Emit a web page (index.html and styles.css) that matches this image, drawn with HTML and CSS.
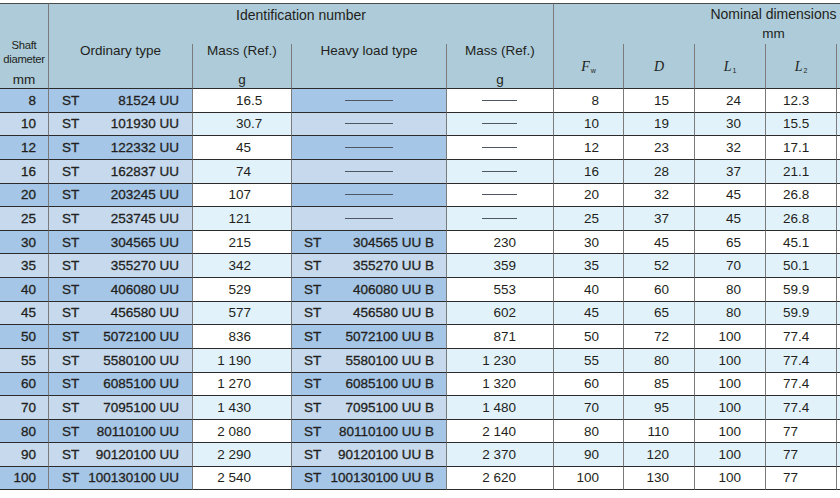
FILE: index.html
```html
<!DOCTYPE html>
<html lang="en">
<head>
<meta charset="utf-8">
<title>Shaft table</title>
<link rel="stylesheet" href="styles.css">
</head>
<body>
<div class="sheet">
<div class="grid">
  <div class="h h-shaft"><span>Shaft<br>diameter</span></div>
  <div class="h h-id">Identification number</div>
  <div class="h h-nom"><span class="big">Nominal dimensions</span><br>mm</div>
  <div class="h h-ord">Ordinary type</div>
  <div class="h h-mass">Mass (Ref.)</div>
  <div class="h h-heavy">Heavy load type</div>
  <div class="h h-mass2">Mass (Ref.)</div>
  <div class="h h-fw"><span class="sym">F</span><span class="sub">w</span></div>
  <div class="h h-d"><span class="sym">D</span></div>
  <div class="h h-l1"><span class="sym">L</span><span class="sub">1</span></div>
  <div class="h h-l2"><span class="sym">L</span><span class="sub">2</span></div>
  <div class="h h-x"></div>
  <div class="h h-mm">mm</div>
  <div class="h h-g1">g</div>
  <div class="h h-g2">g</div>

  <div class="row odd">
    <div class="c first shaft">8</div><div class="c id"><span>ST</span><span>81524 UU</span></div><div class="c mass"><span>16</span><span class="fr">.5</span></div><div class="c hid"><span class="dash wide"></span></div><div class="c hmass"><span class="dash"></span></div><div class="c n1">8</div><div class="c n2">15</div><div class="c n3">24</div><div class="c n4">12.3</div><div class="c nx"></div>
  </div>
  <div class="row even">
    <div class="c first shaft">10</div><div class="c id"><span>ST</span><span>101930 UU</span></div><div class="c mass"><span>30</span><span class="fr">.7</span></div><div class="c hid"><span class="dash wide"></span></div><div class="c hmass"><span class="dash"></span></div><div class="c n1">10</div><div class="c n2">19</div><div class="c n3">30</div><div class="c n4">15.5</div><div class="c nx"></div>
  </div>
  <div class="row odd">
    <div class="c first shaft">12</div><div class="c id"><span>ST</span><span>122332 UU</span></div><div class="c mass"><span>45</span><span class="fr"></span></div><div class="c hid"><span class="dash wide"></span></div><div class="c hmass"><span class="dash"></span></div><div class="c n1">12</div><div class="c n2">23</div><div class="c n3">32</div><div class="c n4">17.1</div><div class="c nx"></div>
  </div>
  <div class="row even">
    <div class="c first shaft">16</div><div class="c id"><span>ST</span><span>162837 UU</span></div><div class="c mass"><span>74</span><span class="fr"></span></div><div class="c hid"><span class="dash wide"></span></div><div class="c hmass"><span class="dash"></span></div><div class="c n1">16</div><div class="c n2">28</div><div class="c n3">37</div><div class="c n4">21.1</div><div class="c nx"></div>
  </div>
  <div class="row odd">
    <div class="c first shaft">20</div><div class="c id"><span>ST</span><span>203245 UU</span></div><div class="c mass"><span>107</span><span class="fr"></span></div><div class="c hid"><span class="dash wide"></span></div><div class="c hmass"><span class="dash"></span></div><div class="c n1">20</div><div class="c n2">32</div><div class="c n3">45</div><div class="c n4">26.8</div><div class="c nx"></div>
  </div>
  <div class="row even">
    <div class="c first shaft">25</div><div class="c id"><span>ST</span><span>253745 UU</span></div><div class="c mass"><span>121</span><span class="fr"></span></div><div class="c hid"><span class="dash wide"></span></div><div class="c hmass"><span class="dash"></span></div><div class="c n1">25</div><div class="c n2">37</div><div class="c n3">45</div><div class="c n4">26.8</div><div class="c nx"></div>
  </div>
  <div class="row odd">
    <div class="c first shaft">30</div><div class="c id"><span>ST</span><span>304565 UU</span></div><div class="c mass"><span>215</span><span class="fr"></span></div><div class="c hid id2"><span>ST</span><span>304565 UU B</span></div><div class="c hmass">230</div><div class="c n1">30</div><div class="c n2">45</div><div class="c n3">65</div><div class="c n4">45.1</div><div class="c nx"></div>
  </div>
  <div class="row even">
    <div class="c first shaft">35</div><div class="c id"><span>ST</span><span>355270 UU</span></div><div class="c mass"><span>342</span><span class="fr"></span></div><div class="c hid id2"><span>ST</span><span>355270 UU B</span></div><div class="c hmass">359</div><div class="c n1">35</div><div class="c n2">52</div><div class="c n3">70</div><div class="c n4">50.1</div><div class="c nx"></div>
  </div>
  <div class="row odd">
    <div class="c first shaft">40</div><div class="c id"><span>ST</span><span>406080 UU</span></div><div class="c mass"><span>529</span><span class="fr"></span></div><div class="c hid id2"><span>ST</span><span>406080 UU B</span></div><div class="c hmass">553</div><div class="c n1">40</div><div class="c n2">60</div><div class="c n3">80</div><div class="c n4">59.9</div><div class="c nx"></div>
  </div>
  <div class="row even">
    <div class="c first shaft">45</div><div class="c id"><span>ST</span><span>456580 UU</span></div><div class="c mass"><span>577</span><span class="fr"></span></div><div class="c hid id2"><span>ST</span><span>456580 UU B</span></div><div class="c hmass">602</div><div class="c n1">45</div><div class="c n2">65</div><div class="c n3">80</div><div class="c n4">59.9</div><div class="c nx"></div>
  </div>
  <div class="row odd">
    <div class="c first shaft">50</div><div class="c id"><span>ST</span><span>5072100 UU</span></div><div class="c mass"><span>836</span><span class="fr"></span></div><div class="c hid id2"><span>ST</span><span>5072100 UU B</span></div><div class="c hmass">871</div><div class="c n1">50</div><div class="c n2">72</div><div class="c n3">100</div><div class="c n4">77.4</div><div class="c nx"></div>
  </div>
  <div class="row even">
    <div class="c first shaft">55</div><div class="c id"><span>ST</span><span>5580100 UU</span></div><div class="c mass"><span>1 190</span><span class="fr"></span></div><div class="c hid id2"><span>ST</span><span>5580100 UU B</span></div><div class="c hmass">1 230</div><div class="c n1">55</div><div class="c n2">80</div><div class="c n3">100</div><div class="c n4">77.4</div><div class="c nx"></div>
  </div>
  <div class="row odd">
    <div class="c first shaft">60</div><div class="c id"><span>ST</span><span>6085100 UU</span></div><div class="c mass"><span>1 270</span><span class="fr"></span></div><div class="c hid id2"><span>ST</span><span>6085100 UU B</span></div><div class="c hmass">1 320</div><div class="c n1">60</div><div class="c n2">85</div><div class="c n3">100</div><div class="c n4">77.4</div><div class="c nx"></div>
  </div>
  <div class="row even">
    <div class="c first shaft">70</div><div class="c id"><span>ST</span><span>7095100 UU</span></div><div class="c mass"><span>1 430</span><span class="fr"></span></div><div class="c hid id2"><span>ST</span><span>7095100 UU B</span></div><div class="c hmass">1 480</div><div class="c n1">70</div><div class="c n2">95</div><div class="c n3">100</div><div class="c n4">77.4</div><div class="c nx"></div>
  </div>
  <div class="row odd">
    <div class="c first shaft">80</div><div class="c id"><span>ST</span><span>80110100 UU</span></div><div class="c mass"><span>2 080</span><span class="fr"></span></div><div class="c hid id2"><span>ST</span><span>80110100 UU B</span></div><div class="c hmass">2 140</div><div class="c n1">80</div><div class="c n2">110</div><div class="c n3">100</div><div class="c n4">77</div><div class="c nx"></div>
  </div>
  <div class="row even">
    <div class="c first shaft">90</div><div class="c id"><span>ST</span><span>90120100 UU</span></div><div class="c mass"><span>2 290</span><span class="fr"></span></div><div class="c hid id2"><span>ST</span><span>90120100 UU B</span></div><div class="c hmass">2 370</div><div class="c n1">90</div><div class="c n2">120</div><div class="c n3">100</div><div class="c n4">77</div><div class="c nx"></div>
  </div>
  <div class="row odd last">
    <div class="c first shaft">100</div><div class="c id"><span>ST</span><span>100130100 UU</span></div><div class="c mass"><span>2 540</span><span class="fr"></span></div><div class="c hid id2"><span>ST</span><span>100130100 UU B</span></div><div class="c hmass">2 620</div><div class="c n1">100</div><div class="c n2">130</div><div class="c n3">100</div><div class="c n4">77</div><div class="c nx"></div>
  </div>
</div>
</div>
</body>
</html>
```

FILE: styles.css
```css
* { box-sizing: border-box; }
html, body { margin: 0; padding: 0; background: #ffffff; overflow: hidden; }
body {
  font-family: "Liberation Sans", Arial, sans-serif;
  color: #231f20;
  width: 840px;
  height: 498px;
}
.sheet { padding-top: 3px; width: 1000px; }
.grid {
  display: grid;
  grid-template-columns: 48px 144px 99px 155px 107px 70px 71px 71px 71px 157px;
  grid-template-rows: 41px 22px 22px repeat(17, 23.63px);
  font-size: 13.5px;
}
.row { display: contents; }

/* header */
.h {
  background: #adcbd9;
  font-size: 13.5px;
  line-height: 14px;
  text-align: center;
}
.h-shaft {
  grid-column: 1; grid-row: 1 / 3;
  border-top: 1px solid #4a4a4a;
  display: flex; align-items: flex-end; justify-content: center;
  font-size: 11.3px; line-height: 14px; letter-spacing: -0.3px;
  padding-bottom: 0;
}
.h-id {
  grid-column: 2 / 6; grid-row: 1;
  border-top: 1px solid #4a4a4a; border-left: 1px solid #7b7b7b;
  font-size: 14px; line-height: 16px; padding-top: 3px;
}
.h-nom {
  grid-column: 6 / 11; grid-row: 1;
  border-top: 1px solid #4a4a4a; border-left: 1px solid #7b7b7b;
  line-height: 19px; padding-top: 1px;
}
.h-nom .big { font-size: 14px; }
.h-ord { grid-column: 2; grid-row: 2 / 4; border-left: 1px solid #7b7b7b; }
.h-mass { grid-column: 3; grid-row: 2; border-left: 1px solid #7b7b7b; }
.h-heavy { grid-column: 4; grid-row: 2 / 4; border-left: 1px solid #7b7b7b; }
.h-mass2 { grid-column: 5; grid-row: 2; border-left: 1px solid #7b7b7b; }
.h-fw, .h-d, .h-l1, .h-l2, .h-x {
  grid-row: 2 / 4; border-left: 1px solid #7b7b7b;
  display: flex; align-items: center; justify-content: center;
  padding-top: 2px;
}
.h-fw { grid-column: 6; }
.h-d { grid-column: 7; }
.h-l1 { grid-column: 8; }
.h-l2 { grid-column: 9; }
.h-x { grid-column: 10; }
.h-mm, .h-g1, .h-g2 {
  grid-row: 3;
  display: flex; align-items: flex-end; justify-content: center;
  line-height: 16px;
}
.h-mm { grid-column: 1; }
.h-g1 { grid-column: 3; border-left: 1px solid #7b7b7b; }
.h-g2 { grid-column: 5; border-left: 1px solid #7b7b7b; }
.sym {
  font-family: "Liberation Serif", "Times New Roman", serif;
  font-style: italic;
  font-size: 14px;
}
.sub {
  font-size: 7px;
  position: relative;
  top: 4px;
  margin-left: 1px;
}

/* body cells */
.c {
  border-top: 1px solid #2b2b2b;
  border-left: 1px solid #7b7b7b;
  display: flex;
  align-items: center;
  white-space: nowrap;
}
.c.first { border-left: 0; }
.last .c { border-bottom: 1px solid #2b2b2b; }

.odd .c { background: #ffffff; }
.even .c { background: #e1f2fb; }
.odd .shaft, .odd .id, .odd .hid { background: #a5c6e7; }
.even .shaft, .even .id, .even .hid { background: #c6d9ed; }

.shaft, .id, .id2 { -webkit-text-stroke: 0.3px #231f20; }
.shaft { justify-content: flex-end; padding-right: 12px; }
.id { justify-content: space-between; padding: 0 13px; }
.hid { justify-content: center; }
.hid.id2 { justify-content: space-between; padding: 0 12px; }
.mass { justify-content: flex-end; padding-right: 28px; }
.mass .fr { display: inline-block; width: 12px; }
.hmass { justify-content: flex-end; padding-right: 37px; }
.hmass .dash { margin-right: -1px; }
.n1 { justify-content: flex-end; padding-right: 24px; }
.n2 { justify-content: flex-end; padding-right: 25px; }
.n3 { justify-content: flex-end; padding-right: 24px; }
.n4 { justify-content: flex-start; padding-left: 17px; }

.dash {
  display: inline-block;
  width: 35px;
  height: 0;
  border-top: 1px solid #4e5763;
}
.dash.wide { width: 48px; }
```
